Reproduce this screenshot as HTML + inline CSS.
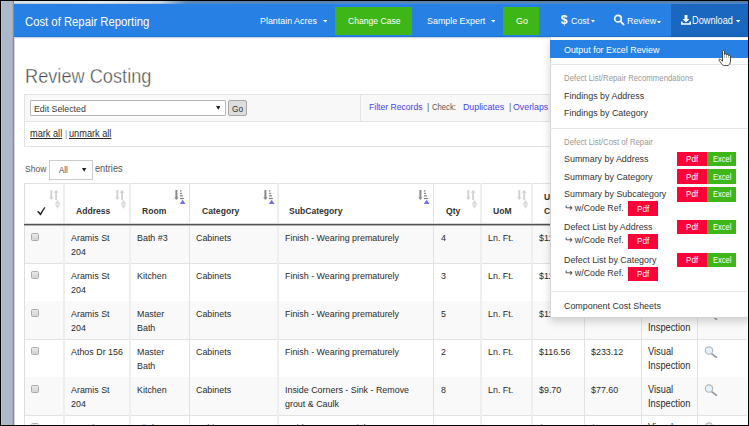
<!DOCTYPE html>
<html><head><meta charset="utf-8"><title>Cost of Repair Reporting</title>
<style>
html,body{margin:0;padding:0;width:749px;height:426px;overflow:hidden;background:#fff}
body{position:relative;font-family:"Liberation Sans", sans-serif}
.t{position:absolute;white-space:nowrap}
.r{position:absolute;display:block}
</style></head><body>
<div class="r" style="left:0;top:0;width:749px;height:426px;background:#fff"></div>
<div class="r" style="left:14px;top:4px;width:734px;height:33px;background:#2780e3;"></div>
<div class="r" style="left:671px;top:4px;width:77px;height:33px;background:#1967be;"></div>
<div class="r" style="left:14px;top:36px;width:657px;height:1px;background:#1f72d4;"></div>
<div class="r" style="left:671px;top:36px;width:77px;height:1px;background:#155fb4;"></div>
<div class="r" style="left:14px;top:37px;width:734px;height:1px;background:#c9d9ec;"></div>
<div class="r" style="left:14px;top:38px;width:734px;height:1px;background:#f1f4f8;"></div>
<div class="t" style="left:25.2px;top:14.70px;font-size:12.43px;line-height:14px;color:#fff;transform:scaleX(0.9091);transform-origin:0 0;">Cost of Repair Reporting</div>
<div class="t" style="left:259.5px;top:15.40px;font-size:9.79px;line-height:11px;color:#fff;transform:scaleX(0.9091);transform-origin:0 0;">Plantain Acres</div>
<svg class="r" style="left:322.6px;top:20.2px" width="4.5" height="2.6" viewBox="0 0 4.5 2.6"><path d="M0 0H4.5L2.25 2.6Z" fill="#fff"/></svg>
<div class="r" style="left:335px;top:7px;width:77px;height:27.5px;background:#3fb618;"></div>
<div class="t" style="left:347.6px;top:15.40px;font-size:9.46px;line-height:11px;color:#fff;transform:scaleX(0.9091);transform-origin:0 0;">Change Case</div>
<div class="t" style="left:427px;top:15.40px;font-size:9.79px;line-height:11px;color:#fff;transform:scaleX(0.9091);transform-origin:0 0;">Sample Expert</div>
<svg class="r" style="left:490.5px;top:20.2px" width="4.5" height="2.6" viewBox="0 0 4.5 2.6"><path d="M0 0H4.5L2.25 2.6Z" fill="#fff"/></svg>
<div class="r" style="left:503px;top:7px;width:36px;height:27.5px;background:#3fb618;"></div>
<div class="t" style="left:515.6px;top:15.40px;font-size:9.79px;line-height:11px;color:#fff;transform:scaleX(0.9091);transform-origin:0 0;">Go</div>
<div class="t" style="left:560.8px;top:12.80px;font-size:12.20px;line-height:14px;color:#fff;font-weight:bold;">$</div>
<div class="t" style="left:571px;top:15.40px;font-size:9.79px;line-height:11px;color:#fff;transform:scaleX(0.9091);transform-origin:0 0;">Cost</div>
<svg class="r" style="left:590.5px;top:20.2px" width="4" height="2.5" viewBox="0 0 4 2.5"><path d="M0 0H4L2.0 2.5Z" fill="#fff"/></svg>
<svg class="r" style="left:613px;top:14px" width="13" height="12" viewBox="0 0 13 12"><circle cx="5" cy="4.7" r="3.3" fill="none" stroke="#fff" stroke-width="1.6"/><path d="M7.4 7.2L10.6 10.6" stroke="#fff" stroke-width="1.9" stroke-linecap="round"/></svg>
<div class="t" style="left:626.8px;top:15.40px;font-size:9.79px;line-height:11px;color:#fff;transform:scaleX(0.9091);transform-origin:0 0;">Review</div>
<svg class="r" style="left:657px;top:20.5px" width="4" height="2.5" viewBox="0 0 4 2.5"><path d="M0 0H4L2.0 2.5Z" fill="#fff"/></svg>
<svg class="r" style="left:680px;top:14px" width="12" height="12" viewBox="0 0 12 12"><path d="M4.6 1H7.4V5H9.4L6 8.6L2.6 5H4.6Z" fill="#fff"/><path d="M1 7.5H2.6V9.3H9.4V7.5H11V10.8H1Z" fill="#fff"/></svg>
<div class="t" style="left:692.2px;top:14.70px;font-size:10.12px;line-height:12px;color:#fff;transform:scaleX(0.9091);transform-origin:0 0;">Download</div>
<svg class="r" style="left:735.6px;top:20.2px" width="4.2" height="2.6" viewBox="0 0 4.2 2.6"><path d="M0 0H4.2L2.1 2.6Z" fill="#fff"/></svg>
<div class="t" style="left:24.5px;top:65.00px;font-size:20.02px;line-height:23px;color:#4a4a4a;transform:scaleX(0.9091);transform-origin:0 0;-webkit-text-stroke:0.4px #fff;">Review Costing</div>
<div class="r" style="left:24px;top:94px;width:724px;height:53px;background:#fff;border:1px solid #e3e3e3;box-sizing:border-box"></div>
<div class="r" style="left:25px;top:95px;width:723px;height:26px;background:#f8f8f8;"></div>
<div class="r" style="left:24px;top:121px;width:724px;height:1px;background:#e3e3e3;"></div>
<div class="r" style="left:360px;top:95px;width:1px;height:26px;background:#e3e3e3;"></div>
<div class="r" style="left:30px;top:100px;width:196px;height:16px;background:#fff;border:1px solid #b9b9b9;box-sizing:border-box;border-radius:1px"></div>
<div class="t" style="left:33.6px;top:102.50px;font-size:9.68px;line-height:11px;color:#3a3a3a;transform:scaleX(0.9091);transform-origin:0 0;">Edit Selected</div>
<svg class="r" style="left:215.5px;top:106px" width="4.6" height="3.8" viewBox="0 0 4.6 3.8"><path d="M0 0H4.6L2.3 3.8Z" fill="#222"/></svg>
<div class="r" style="left:228px;top:100px;width:18.5px;height:16px;background:#dedede;border:1px solid #a6a6a6;box-sizing:border-box;border-radius:2px"></div>
<div class="t" style="left:231.8px;top:103.50px;font-size:9.13px;line-height:10px;color:#333;transform:scaleX(0.9091);transform-origin:0 0;">Go</div>
<div class="t" style="left:369.3px;top:101.10px;font-size:9.46px;line-height:11px;color:#4444ec;transform:scaleX(0.9091);transform-origin:0 0;">Filter Records</div>
<div class="t" style="left:426.8px;top:101.10px;font-size:9.46px;line-height:11px;color:#555;transform:scaleX(0.9091);transform-origin:0 0;">|</div>
<div class="t" style="left:431.6px;top:102.10px;font-size:8.47px;line-height:10px;color:#555;transform:scaleX(0.9091);transform-origin:0 0;">Check:</div>
<div class="t" style="left:463.3px;top:101.10px;font-size:9.68px;line-height:11px;color:#4444ec;transform:scaleX(0.9091);transform-origin:0 0;">Duplicates</div>
<div class="t" style="left:508.6px;top:101.10px;font-size:9.46px;line-height:11px;color:#555;transform:scaleX(0.9091);transform-origin:0 0;">|</div>
<div class="t" style="left:513px;top:101.10px;font-size:9.68px;line-height:11px;color:#4444ec;transform:scaleX(0.9091);transform-origin:0 0;">Overlaps</div>
<div class="t" style="left:30.3px;top:127.80px;font-size:10.12px;line-height:12px;color:#2a2a2a;transform:scaleX(0.9091);transform-origin:0 0;"><u>mark all</u></div>
<div class="t" style="left:65.2px;top:128.30px;font-size:9.79px;line-height:11px;color:#999;transform:scaleX(0.9091);transform-origin:0 0;">|</div>
<div class="t" style="left:69.4px;top:127.80px;font-size:10.12px;line-height:12px;color:#2a2a2a;transform:scaleX(0.9091);transform-origin:0 0;"><u>unmark all</u></div>
<div class="t" style="left:24.7px;top:163.10px;font-size:9.46px;line-height:11px;color:#555;transform:scaleX(0.9091);transform-origin:0 0;">Show</div>
<div class="r" style="left:49px;top:160px;width:44px;height:20px;background:#fff;border:1px solid #ccc;box-sizing:border-box"></div>
<div class="t" style="left:58.5px;top:164.80px;font-size:8.69px;line-height:10px;color:#444;transform:scaleX(0.9091);transform-origin:0 0;">All</div>
<svg class="r" style="left:82.4px;top:167.9px" width="4.4" height="3.8" viewBox="0 0 4.4 3.8"><path d="M0 0H4.4L2.2 3.8Z" fill="#222"/></svg>
<div class="t" style="left:94.7px;top:163.10px;font-size:10.12px;line-height:12px;color:#555;transform:scaleX(0.9091);transform-origin:0 0;">entries</div>
<div class="r" style="left:24px;top:183px;width:723px;height:1px;background:#e2e2e2;"></div>
<div class="r" style="left:24px;top:226px;width:723px;height:38px;background:#f9f9f9;"></div>
<div class="r" style="left:24px;top:263px;width:723px;height:1px;background:#e2e2e2;"></div>
<div class="r" style="left:31px;top:233px;width:8px;height:8px;background:linear-gradient(#e8e8e8,#d4d4d4);border:1px solid #ababab;box-sizing:border-box;border-radius:1.5px"></div>
<div class="t" style="left:71px;top:231.25px;font-size:9.79px;line-height:13.5px;color:#2a2a2a;transform:scaleX(0.9091);transform-origin:0 0;">Aramis St<br>204</div>
<div class="t" style="left:137px;top:231.25px;font-size:9.79px;line-height:13.5px;color:#2a2a2a;transform:scaleX(0.9091);transform-origin:0 0;">Bath #3</div>
<div class="t" style="left:196.3px;top:231.25px;font-size:9.79px;line-height:13.5px;color:#2a2a2a;transform:scaleX(0.9091);transform-origin:0 0;">Cabinets</div>
<div class="t" style="left:284.8px;top:231.25px;font-size:9.79px;line-height:13.5px;color:#2a2a2a;transform:scaleX(0.9091);transform-origin:0 0;">Finish - Wearing prematurely</div>
<div class="t" style="left:440.6px;top:231.25px;font-size:9.79px;line-height:13.5px;color:#2a2a2a;transform:scaleX(0.9091);transform-origin:0 0;">4</div>
<div class="t" style="left:488px;top:231.25px;font-size:9.79px;line-height:13.5px;color:#2a2a2a;transform:scaleX(0.9091);transform-origin:0 0;">Ln. Ft.</div>
<div class="t" style="left:538.6px;top:231.25px;font-size:9.79px;line-height:13.5px;color:#2a2a2a;transform:scaleX(0.9091);transform-origin:0 0;">$116.56</div>
<div class="t" style="left:591.3px;top:231.25px;font-size:9.79px;line-height:13.5px;color:#2a2a2a;transform:scaleX(0.9091);transform-origin:0 0;">$466.24</div>
<div class="t" style="left:648px;top:231.25px;font-size:10.23px;line-height:13.5px;color:#2a2a2a;transform:scaleX(0.9091);transform-origin:0 0;">Visual<br>Inspection</div>
<svg class="r" style="left:704px;top:231.5px" width="15" height="13" viewBox="0 0 15 13"><path d="M7.6 7.6L12.4 11.2" stroke="#9a9aa6" stroke-width="1.7" stroke-linecap="round"/><circle cx="5" cy="4.6" r="3.7" fill="#e2f1fb" stroke="#b4b4b8" stroke-width="1.1"/></svg>
<div class="r" style="left:24px;top:301px;width:723px;height:1px;background:#e2e2e2;"></div>
<div class="r" style="left:31px;top:271px;width:8px;height:8px;background:linear-gradient(#e8e8e8,#d4d4d4);border:1px solid #ababab;box-sizing:border-box;border-radius:1.5px"></div>
<div class="t" style="left:71px;top:269.25px;font-size:9.79px;line-height:13.5px;color:#2a2a2a;transform:scaleX(0.9091);transform-origin:0 0;">Aramis St<br>204</div>
<div class="t" style="left:137px;top:269.25px;font-size:9.79px;line-height:13.5px;color:#2a2a2a;transform:scaleX(0.9091);transform-origin:0 0;">Kitchen</div>
<div class="t" style="left:196.3px;top:269.25px;font-size:9.79px;line-height:13.5px;color:#2a2a2a;transform:scaleX(0.9091);transform-origin:0 0;">Cabinets</div>
<div class="t" style="left:284.8px;top:269.25px;font-size:9.79px;line-height:13.5px;color:#2a2a2a;transform:scaleX(0.9091);transform-origin:0 0;">Finish - Wearing prematurely</div>
<div class="t" style="left:440.6px;top:269.25px;font-size:9.79px;line-height:13.5px;color:#2a2a2a;transform:scaleX(0.9091);transform-origin:0 0;">3</div>
<div class="t" style="left:488px;top:269.25px;font-size:9.79px;line-height:13.5px;color:#2a2a2a;transform:scaleX(0.9091);transform-origin:0 0;">Ln. Ft.</div>
<div class="t" style="left:538.6px;top:269.25px;font-size:9.79px;line-height:13.5px;color:#2a2a2a;transform:scaleX(0.9091);transform-origin:0 0;">$116.56</div>
<div class="t" style="left:591.3px;top:269.25px;font-size:9.79px;line-height:13.5px;color:#2a2a2a;transform:scaleX(0.9091);transform-origin:0 0;">$349.68</div>
<div class="t" style="left:648px;top:269.25px;font-size:10.23px;line-height:13.5px;color:#2a2a2a;transform:scaleX(0.9091);transform-origin:0 0;">Visual<br>Inspection</div>
<svg class="r" style="left:704px;top:269.5px" width="15" height="13" viewBox="0 0 15 13"><path d="M7.6 7.6L12.4 11.2" stroke="#9a9aa6" stroke-width="1.7" stroke-linecap="round"/><circle cx="5" cy="4.6" r="3.7" fill="#e2f1fb" stroke="#b4b4b8" stroke-width="1.1"/></svg>
<div class="r" style="left:24px;top:301px;width:723px;height:38px;background:#f9f9f9;"></div>
<div class="r" style="left:24px;top:339px;width:723px;height:1px;background:#e2e2e2;"></div>
<div class="r" style="left:31px;top:309px;width:8px;height:8px;background:linear-gradient(#e8e8e8,#d4d4d4);border:1px solid #ababab;box-sizing:border-box;border-radius:1.5px"></div>
<div class="t" style="left:71px;top:307.25px;font-size:9.79px;line-height:13.5px;color:#2a2a2a;transform:scaleX(0.9091);transform-origin:0 0;">Aramis St<br>204</div>
<div class="t" style="left:137px;top:307.25px;font-size:9.79px;line-height:13.5px;color:#2a2a2a;transform:scaleX(0.9091);transform-origin:0 0;">Master<br>Bath</div>
<div class="t" style="left:196.3px;top:307.25px;font-size:9.79px;line-height:13.5px;color:#2a2a2a;transform:scaleX(0.9091);transform-origin:0 0;">Cabinets</div>
<div class="t" style="left:284.8px;top:307.25px;font-size:9.79px;line-height:13.5px;color:#2a2a2a;transform:scaleX(0.9091);transform-origin:0 0;">Finish - Wearing prematurely</div>
<div class="t" style="left:440.6px;top:307.25px;font-size:9.79px;line-height:13.5px;color:#2a2a2a;transform:scaleX(0.9091);transform-origin:0 0;">5</div>
<div class="t" style="left:488px;top:307.25px;font-size:9.79px;line-height:13.5px;color:#2a2a2a;transform:scaleX(0.9091);transform-origin:0 0;">Ln. Ft.</div>
<div class="t" style="left:538.6px;top:307.25px;font-size:9.79px;line-height:13.5px;color:#2a2a2a;transform:scaleX(0.9091);transform-origin:0 0;">$116.56</div>
<div class="t" style="left:591.3px;top:307.25px;font-size:9.79px;line-height:13.5px;color:#2a2a2a;transform:scaleX(0.9091);transform-origin:0 0;">$582.80</div>
<div class="t" style="left:648px;top:307.25px;font-size:10.23px;line-height:13.5px;color:#2a2a2a;transform:scaleX(0.9091);transform-origin:0 0;">Visual<br>Inspection</div>
<svg class="r" style="left:704px;top:307.5px" width="15" height="13" viewBox="0 0 15 13"><path d="M7.6 7.6L12.4 11.2" stroke="#9a9aa6" stroke-width="1.7" stroke-linecap="round"/><circle cx="5" cy="4.6" r="3.7" fill="#e2f1fb" stroke="#b4b4b8" stroke-width="1.1"/></svg>
<div class="r" style="left:24px;top:377px;width:723px;height:1px;background:#e2e2e2;"></div>
<div class="r" style="left:31px;top:347px;width:8px;height:8px;background:linear-gradient(#e8e8e8,#d4d4d4);border:1px solid #ababab;box-sizing:border-box;border-radius:1.5px"></div>
<div class="t" style="left:71px;top:345.25px;font-size:9.79px;line-height:13.5px;color:#2a2a2a;transform:scaleX(0.9091);transform-origin:0 0;">Athos Dr 156</div>
<div class="t" style="left:137px;top:345.25px;font-size:9.79px;line-height:13.5px;color:#2a2a2a;transform:scaleX(0.9091);transform-origin:0 0;">Master<br>Bath</div>
<div class="t" style="left:196.3px;top:345.25px;font-size:9.79px;line-height:13.5px;color:#2a2a2a;transform:scaleX(0.9091);transform-origin:0 0;">Cabinets</div>
<div class="t" style="left:284.8px;top:345.25px;font-size:9.79px;line-height:13.5px;color:#2a2a2a;transform:scaleX(0.9091);transform-origin:0 0;">Finish - Wearing prematurely</div>
<div class="t" style="left:440.6px;top:345.25px;font-size:9.79px;line-height:13.5px;color:#2a2a2a;transform:scaleX(0.9091);transform-origin:0 0;">2</div>
<div class="t" style="left:488px;top:345.25px;font-size:9.79px;line-height:13.5px;color:#2a2a2a;transform:scaleX(0.9091);transform-origin:0 0;">Ln. Ft.</div>
<div class="t" style="left:538.6px;top:345.25px;font-size:9.79px;line-height:13.5px;color:#2a2a2a;transform:scaleX(0.9091);transform-origin:0 0;">$116.56</div>
<div class="t" style="left:591.3px;top:345.25px;font-size:9.79px;line-height:13.5px;color:#2a2a2a;transform:scaleX(0.9091);transform-origin:0 0;">$233.12</div>
<div class="t" style="left:648px;top:345.25px;font-size:10.23px;line-height:13.5px;color:#2a2a2a;transform:scaleX(0.9091);transform-origin:0 0;">Visual<br>Inspection</div>
<svg class="r" style="left:704px;top:345.5px" width="15" height="13" viewBox="0 0 15 13"><path d="M7.6 7.6L12.4 11.2" stroke="#9a9aa6" stroke-width="1.7" stroke-linecap="round"/><circle cx="5" cy="4.6" r="3.7" fill="#e2f1fb" stroke="#b4b4b8" stroke-width="1.1"/></svg>
<div class="r" style="left:24px;top:377px;width:723px;height:38px;background:#f9f9f9;"></div>
<div class="r" style="left:24px;top:415px;width:723px;height:1px;background:#e2e2e2;"></div>
<div class="r" style="left:31px;top:385px;width:8px;height:8px;background:linear-gradient(#e8e8e8,#d4d4d4);border:1px solid #ababab;box-sizing:border-box;border-radius:1.5px"></div>
<div class="t" style="left:71px;top:383.25px;font-size:9.79px;line-height:13.5px;color:#2a2a2a;transform:scaleX(0.9091);transform-origin:0 0;">Aramis St<br>204</div>
<div class="t" style="left:137px;top:383.25px;font-size:9.79px;line-height:13.5px;color:#2a2a2a;transform:scaleX(0.9091);transform-origin:0 0;">Kitchen</div>
<div class="t" style="left:196.3px;top:383.25px;font-size:9.79px;line-height:13.5px;color:#2a2a2a;transform:scaleX(0.9091);transform-origin:0 0;">Cabinets</div>
<div class="t" style="left:284.8px;top:383.25px;font-size:9.79px;line-height:13.5px;color:#2a2a2a;transform:scaleX(0.9091);transform-origin:0 0;">Inside Corners - Sink - Remove<br>grout &amp; Caulk</div>
<div class="t" style="left:440.6px;top:383.25px;font-size:9.79px;line-height:13.5px;color:#2a2a2a;transform:scaleX(0.9091);transform-origin:0 0;">8</div>
<div class="t" style="left:488px;top:383.25px;font-size:9.79px;line-height:13.5px;color:#2a2a2a;transform:scaleX(0.9091);transform-origin:0 0;">Ln. Ft.</div>
<div class="t" style="left:538.6px;top:383.25px;font-size:9.79px;line-height:13.5px;color:#2a2a2a;transform:scaleX(0.9091);transform-origin:0 0;">$9.70</div>
<div class="t" style="left:591.3px;top:383.25px;font-size:9.79px;line-height:13.5px;color:#2a2a2a;transform:scaleX(0.9091);transform-origin:0 0;">$77.60</div>
<div class="t" style="left:648px;top:383.25px;font-size:10.23px;line-height:13.5px;color:#2a2a2a;transform:scaleX(0.9091);transform-origin:0 0;">Visual<br>Inspection</div>
<svg class="r" style="left:704px;top:383.5px" width="15" height="13" viewBox="0 0 15 13"><path d="M7.6 7.6L12.4 11.2" stroke="#9a9aa6" stroke-width="1.7" stroke-linecap="round"/><circle cx="5" cy="4.6" r="3.7" fill="#e2f1fb" stroke="#b4b4b8" stroke-width="1.1"/></svg>
<div class="r" style="left:24px;top:453px;width:723px;height:1px;background:#e2e2e2;"></div>
<div class="r" style="left:31px;top:423px;width:8px;height:8px;background:linear-gradient(#e8e8e8,#d4d4d4);border:1px solid #ababab;box-sizing:border-box;border-radius:1.5px"></div>
<div class="t" style="left:71px;top:421.25px;font-size:9.79px;line-height:13.5px;color:#2a2a2a;transform:scaleX(0.9091);transform-origin:0 0;">Aramis St<br>204</div>
<div class="t" style="left:137px;top:421.25px;font-size:9.79px;line-height:13.5px;color:#2a2a2a;transform:scaleX(0.9091);transform-origin:0 0;">Kitchen</div>
<div class="t" style="left:196.3px;top:421.25px;font-size:9.79px;line-height:13.5px;color:#2a2a2a;transform:scaleX(0.9091);transform-origin:0 0;">Cabinets</div>
<div class="t" style="left:284.8px;top:421.25px;font-size:9.79px;line-height:13.5px;color:#2a2a2a;transform:scaleX(0.9091);transform-origin:0 0;">Inside Corners - Sink - Remove<br>grout &amp; Caulk</div>
<div class="t" style="left:440.6px;top:421.25px;font-size:9.79px;line-height:13.5px;color:#2a2a2a;transform:scaleX(0.9091);transform-origin:0 0;">8</div>
<div class="t" style="left:488px;top:421.25px;font-size:9.79px;line-height:13.5px;color:#2a2a2a;transform:scaleX(0.9091);transform-origin:0 0;">Ln. Ft.</div>
<div class="t" style="left:538.6px;top:421.25px;font-size:9.79px;line-height:13.5px;color:#2a2a2a;transform:scaleX(0.9091);transform-origin:0 0;">$9.70</div>
<div class="t" style="left:591.3px;top:421.25px;font-size:9.79px;line-height:13.5px;color:#2a2a2a;transform:scaleX(0.9091);transform-origin:0 0;">$77.60</div>
<div class="t" style="left:648px;top:421.25px;font-size:10.23px;line-height:13.5px;color:#2a2a2a;transform:scaleX(0.9091);transform-origin:0 0;">Visual<br>Inspection</div>
<svg class="r" style="left:704px;top:421.5px" width="15" height="13" viewBox="0 0 15 13"><path d="M7.6 7.6L12.4 11.2" stroke="#9a9aa6" stroke-width="1.7" stroke-linecap="round"/><circle cx="5" cy="4.6" r="3.7" fill="#e2f1fb" stroke="#b4b4b8" stroke-width="1.1"/></svg>
<div class="r" style="left:24px;top:183px;width:1px;height:243px;background:#dedede;"></div>
<div class="r" style="left:63px;top:183px;width:2px;height:243px;background:#eeeeee;"></div>
<div class="r" style="left:129px;top:183px;width:2px;height:243px;background:#eeeeee;"></div>
<div class="r" style="left:189px;top:183px;width:1px;height:243px;background:#e2e2e2;"></div>
<div class="r" style="left:277px;top:183px;width:2px;height:243px;background:#eeeeee;"></div>
<div class="r" style="left:433px;top:183px;width:1px;height:243px;background:#e2e2e2;"></div>
<div class="r" style="left:480px;top:183px;width:2px;height:243px;background:#efefef;"></div>
<div class="r" style="left:531px;top:183px;width:2px;height:243px;background:#eeeeee;"></div>
<div class="r" style="left:584px;top:183px;width:1px;height:243px;background:#e2e2e2;"></div>
<div class="r" style="left:641px;top:183px;width:1px;height:243px;background:#e2e2e2;"></div>
<div class="r" style="left:697px;top:183px;width:1px;height:243px;background:#e2e2e2;"></div>
<div class="r" style="left:24px;top:223px;width:723px;height:1px;background:#d5d5d5;"></div>
<div class="r" style="left:24px;top:224px;width:723px;height:1px;background:#505050;"></div>
<div class="r" style="left:24px;top:225px;width:723px;height:1px;background:#b0b0b0;"></div>
<svg class="r" style="left:36.5px;top:206.5px" width="9" height="9" viewBox="0 0 9 9"><path d="M1 4.6C1.9 5.3 2.8 6.4 3.5 7.6C4.6 5.2 6 2.9 7.6 0.9" fill="none" stroke="#222" stroke-width="1.35" stroke-linecap="round" stroke-linejoin="round"/></svg>
<div class="t" style="left:75.8px;top:205.00px;font-size:9.46px;line-height:11px;color:#333;transform:scaleX(0.9091);transform-origin:0 0;font-weight:bold;">Address</div>
<div class="t" style="left:142px;top:205.00px;font-size:9.46px;line-height:11px;color:#333;transform:scaleX(0.9091);transform-origin:0 0;font-weight:bold;">Room</div>
<div class="t" style="left:201.5px;top:205.00px;font-size:9.46px;line-height:11px;color:#333;transform:scaleX(0.9091);transform-origin:0 0;font-weight:bold;">Category</div>
<div class="t" style="left:289.4px;top:205.00px;font-size:9.46px;line-height:11px;color:#333;transform:scaleX(0.9091);transform-origin:0 0;font-weight:bold;">SubCategory</div>
<div class="t" style="left:445.8px;top:205.00px;font-size:9.46px;line-height:11px;color:#333;transform:scaleX(0.9091);transform-origin:0 0;font-weight:bold;">Qty</div>
<div class="t" style="left:492.9px;top:205.00px;font-size:9.46px;line-height:11px;color:#333;transform:scaleX(0.9091);transform-origin:0 0;font-weight:bold;">UoM</div>
<div class="t" style="left:543.7px;top:190.15px;font-size:9.46px;line-height:13.5px;color:#333;transform:scaleX(0.9091);transform-origin:0 0;font-weight:bold;">Unit<br>Cost</div>
<div class="t" style="left:596px;top:190.15px;font-size:9.46px;line-height:13.5px;color:#333;transform:scaleX(0.9091);transform-origin:0 0;font-weight:bold;">Total<br>Cost</div>
<div class="t" style="left:653px;top:205.00px;font-size:9.46px;line-height:11px;color:#333;transform:scaleX(0.9091);transform-origin:0 0;font-weight:bold;">Source</div>
<svg class="r" style="left:48.8px;top:190px" width="12" height="19" viewBox="0 0 12 19"><g fill="#d2d2d2"><path d="M1.35 0H3.25V7.2H4.6L2.3 10L0 7.2H1.35Z"/><path d="M6.2 10H8.0V2.8H9.7L7.1 0L4.5 2.8H6.2Z"/></g><g fill="#dcdcdc"><path d="M8.5 9.8L11.2 13.9H5.8Z"/><path d="M8.5 18.9L11.2 14.5H5.8Z"/></g></svg>
<svg class="r" style="left:114.9px;top:190px" width="12" height="19" viewBox="0 0 12 19"><g fill="#d2d2d2"><path d="M1.35 0H3.25V7.2H4.6L2.3 10L0 7.2H1.35Z"/><path d="M6.2 10H8.0V2.8H9.7L7.1 0L4.5 2.8H6.2Z"/></g><g fill="#dcdcdc"><path d="M8.5 9.8L11.2 13.9H5.8Z"/><path d="M8.5 18.9L11.2 14.5H5.8Z"/></g></svg>
<svg class="r" style="left:174.1px;top:190px" width="12" height="15" viewBox="0 0 12 15"><g fill="#8a8a8a"><path d="M1.4 0H3.4V7.3H4.6L2.4 10L0.2 7.3H1.4Z"/></g><g fill="#7a7a7a"><rect x="5.9" y="0.3" width="1.5" height="1.2"/><rect x="5.9" y="2.8" width="2.2" height="1.1"/><rect x="5.9" y="5.2" width="3" height="1.2"/><rect x="5.9" y="7.9" width="3.9" height="1.2"/></g><path d="M8.65 9.7L11.5 14H5.8Z" fill="#6e6ee6"/></svg>
<svg class="r" style="left:262.6px;top:190px" width="12" height="15" viewBox="0 0 12 15"><g fill="#8a8a8a"><path d="M1.4 0H3.4V7.3H4.6L2.4 10L0.2 7.3H1.4Z"/></g><g fill="#7a7a7a"><rect x="5.9" y="0.3" width="1.5" height="1.2"/><rect x="5.9" y="2.8" width="2.2" height="1.1"/><rect x="5.9" y="5.2" width="3" height="1.2"/><rect x="5.9" y="7.9" width="3.9" height="1.2"/></g><path d="M8.65 9.7L11.5 14H5.8Z" fill="#6e6ee6"/></svg>
<svg class="r" style="left:418.2px;top:190px" width="12" height="15" viewBox="0 0 12 15"><g fill="#8a8a8a"><path d="M1.4 0H3.4V7.3H4.6L2.4 10L0.2 7.3H1.4Z"/></g><g fill="#7a7a7a"><rect x="5.9" y="0.3" width="1.5" height="1.2"/><rect x="5.9" y="2.8" width="2.2" height="1.1"/><rect x="5.9" y="5.2" width="3" height="1.2"/><rect x="5.9" y="7.9" width="3.9" height="1.2"/></g><path d="M8.65 9.7L11.5 14H5.8Z" fill="#6e6ee6"/></svg>
<svg class="r" style="left:465.8px;top:190px" width="12" height="19" viewBox="0 0 12 19"><g fill="#d2d2d2"><path d="M1.35 0H3.25V7.2H4.6L2.3 10L0 7.2H1.35Z"/><path d="M6.2 10H8.0V2.8H9.7L7.1 0L4.5 2.8H6.2Z"/></g><g fill="#dcdcdc"><path d="M8.5 9.8L11.2 13.9H5.8Z"/><path d="M8.5 18.9L11.2 14.5H5.8Z"/></g></svg>
<svg class="r" style="left:516.6px;top:190px" width="12" height="19" viewBox="0 0 12 19"><g fill="#d2d2d2"><path d="M1.35 0H3.25V7.2H4.6L2.3 10L0 7.2H1.35Z"/><path d="M6.2 10H8.0V2.8H9.7L7.1 0L4.5 2.8H6.2Z"/></g><g fill="#dcdcdc"><path d="M8.5 9.8L11.2 13.9H5.8Z"/><path d="M8.5 18.9L11.2 14.5H5.8Z"/></g></svg>
<div class="r" style="left:549.5px;top:37px;width:200px;height:280.5px;background:#fff;border:1px solid rgba(0,0,0,.16);border-top:1px solid #e6edf5;box-sizing:border-box;box-shadow:0 4px 8px rgba(0,0,0,.16)"></div>
<div class="r" style="left:550px;top:40px;width:198px;height:18px;background:#2780e3;"></div>
<div class="t" style="left:563.7px;top:43.60px;font-size:9.79px;line-height:11px;color:#fff;transform:scaleX(0.9091);transform-origin:0 0;">Output for Excel Review</div>
<div class="r" style="left:550px;top:64px;width:198px;height:1px;background:#e5e5e5;"></div>
<div class="t" style="left:563.5px;top:73.40px;font-size:8.58px;line-height:10px;color:#999;transform:scaleX(0.9091);transform-origin:0 0;">Defect List/Repair Recommendations</div>
<div class="t" style="left:563.5px;top:90.00px;font-size:9.79px;line-height:11px;color:#333;transform:scaleX(0.9091);transform-origin:0 0;">Findings by Address</div>
<div class="t" style="left:563.5px;top:107.00px;font-size:9.79px;line-height:11px;color:#333;transform:scaleX(0.9091);transform-origin:0 0;">Findings by Category</div>
<div class="r" style="left:550px;top:128px;width:198px;height:1px;background:#e5e5e5;"></div>
<div class="t" style="left:563.5px;top:137.00px;font-size:8.58px;line-height:10px;color:#999;transform:scaleX(0.9091);transform-origin:0 0;">Defect List/Cost of Repair</div>
<div class="t" style="left:563.5px;top:153.20px;font-size:9.79px;line-height:11px;color:#333;transform:scaleX(0.9091);transform-origin:0 0;">Summary by Address</div>
<div class="r" style="left:677px;top:151.7px;width:30px;height:14.5px;background:#ff0039;"></div>
<div class="t" style="left:685.7px;top:154.00px;font-size:8.91px;line-height:10px;color:#fff;transform:scaleX(0.9091);transform-origin:0 0;">Pdf</div>
<div class="r" style="left:707px;top:151.7px;width:29.2px;height:14.5px;background:#3fb618;"></div>
<div class="t" style="left:712.5px;top:155.00px;font-size:8.25px;line-height:9px;color:#fff;transform:scaleX(0.9091);transform-origin:0 0;">Excel</div>
<div class="t" style="left:563.5px;top:170.50px;font-size:9.79px;line-height:11px;color:#333;transform:scaleX(0.9091);transform-origin:0 0;">Summary by Category</div>
<div class="r" style="left:677px;top:169.3px;width:30px;height:14.5px;background:#ff0039;"></div>
<div class="t" style="left:685.7px;top:171.60px;font-size:8.91px;line-height:10px;color:#fff;transform:scaleX(0.9091);transform-origin:0 0;">Pdf</div>
<div class="r" style="left:707px;top:169.3px;width:29.2px;height:14.5px;background:#3fb618;"></div>
<div class="t" style="left:712.5px;top:172.60px;font-size:8.25px;line-height:9px;color:#fff;transform:scaleX(0.9091);transform-origin:0 0;">Excel</div>
<div class="t" style="left:563.5px;top:188.00px;font-size:9.79px;line-height:11px;color:#333;transform:scaleX(0.9091);transform-origin:0 0;">Summary by Subcategory</div>
<div class="r" style="left:677px;top:187px;width:30px;height:14.5px;background:#ff0039;"></div>
<div class="t" style="left:685.7px;top:189.30px;font-size:8.91px;line-height:10px;color:#fff;transform:scaleX(0.9091);transform-origin:0 0;">Pdf</div>
<div class="r" style="left:707px;top:187px;width:29.2px;height:14.5px;background:#3fb618;"></div>
<div class="t" style="left:712.5px;top:190.30px;font-size:8.25px;line-height:9px;color:#fff;transform:scaleX(0.9091);transform-origin:0 0;">Excel</div>
<div class="t" style="left:565px;top:201.80px;font-size:9.79px;line-height:11px;color:#333;transform:scaleX(0.9091);transform-origin:0 0;">&#8618; w/Code Ref.</div>
<div class="r" style="left:627.8px;top:201.3px;width:30px;height:14.5px;background:#ff0039;"></div>
<div class="t" style="left:636.5px;top:203.60px;font-size:8.91px;line-height:10px;color:#fff;transform:scaleX(0.9091);transform-origin:0 0;">Pdf</div>
<div class="t" style="left:563.5px;top:220.60px;font-size:9.79px;line-height:11px;color:#333;transform:scaleX(0.9091);transform-origin:0 0;">Defect List by Address</div>
<div class="r" style="left:677px;top:219.7px;width:30px;height:14.5px;background:#ff0039;"></div>
<div class="t" style="left:685.7px;top:222.00px;font-size:8.91px;line-height:10px;color:#fff;transform:scaleX(0.9091);transform-origin:0 0;">Pdf</div>
<div class="r" style="left:707px;top:219.7px;width:29.2px;height:14.5px;background:#3fb618;"></div>
<div class="t" style="left:712.5px;top:223.00px;font-size:8.25px;line-height:9px;color:#fff;transform:scaleX(0.9091);transform-origin:0 0;">Excel</div>
<div class="t" style="left:565px;top:234.40px;font-size:9.79px;line-height:11px;color:#333;transform:scaleX(0.9091);transform-origin:0 0;">&#8618; w/Code Ref.</div>
<div class="r" style="left:627.8px;top:234.0px;width:30px;height:14.5px;background:#ff0039;"></div>
<div class="t" style="left:636.5px;top:236.30px;font-size:8.91px;line-height:10px;color:#fff;transform:scaleX(0.9091);transform-origin:0 0;">Pdf</div>
<div class="t" style="left:563.5px;top:253.60px;font-size:9.79px;line-height:11px;color:#333;transform:scaleX(0.9091);transform-origin:0 0;">Defect List by Category</div>
<div class="r" style="left:677px;top:252.5px;width:30px;height:14.5px;background:#ff0039;"></div>
<div class="t" style="left:685.7px;top:254.80px;font-size:8.91px;line-height:10px;color:#fff;transform:scaleX(0.9091);transform-origin:0 0;">Pdf</div>
<div class="r" style="left:707px;top:252.5px;width:29.2px;height:14.5px;background:#3fb618;"></div>
<div class="t" style="left:712.5px;top:255.80px;font-size:8.25px;line-height:9px;color:#fff;transform:scaleX(0.9091);transform-origin:0 0;">Excel</div>
<div class="t" style="left:565px;top:267.40px;font-size:9.79px;line-height:11px;color:#333;transform:scaleX(0.9091);transform-origin:0 0;">&#8618; w/Code Ref.</div>
<div class="r" style="left:627.8px;top:266.8px;width:30px;height:14.5px;background:#ff0039;"></div>
<div class="t" style="left:636.5px;top:269.10px;font-size:8.91px;line-height:10px;color:#fff;transform:scaleX(0.9091);transform-origin:0 0;">Pdf</div>
<div class="r" style="left:550px;top:290.5px;width:198px;height:1px;background:#e5e5e5;"></div>
<div class="t" style="left:563.5px;top:299.50px;font-size:9.79px;line-height:11px;color:#333;transform:scaleX(0.9091);transform-origin:0 0;">Component Cost Sheets</div>
<svg class="r" style="left:718px;top:49px" width="15" height="18" viewBox="0 0 15 18"><path d="M4.5 2.2C4.5 0.9 6.5 0.9 6.5 2.2V5.6C6.5 4.5 8.5 4.5 8.5 5.6V6.2C8.5 5.2 10.5 5.2 10.5 6.2V6.8C10.5 5.8 12.5 5.8 12.5 6.9V12C12.5 14.6 11.2 16.6 9 16.6H6.6C5.1 16.6 4.3 15.8 3.6 14.8L1.1 11.3C0.6 10.5 1.5 9.5 2.3 10.2L4.5 12.2Z" fill="#fff" stroke="#333" stroke-width="0.9" stroke-linejoin="round"/><path d="M6.5 5.6V9M8.5 6.2V9M10.5 6.8V9" stroke="#888" stroke-width="0.6"/></svg>
<div class="r" style="left:0px;top:0px;width:1px;height:426px;background:#000;"></div>
<div class="r" style="left:1px;top:0px;width:11px;height:426px;background:#adb9ca;"></div>
<div class="r" style="left:1px;top:0px;width:1px;height:426px;background:#b9c6d6;"></div>
<div class="r" style="left:12px;top:0px;width:1px;height:426px;background:#a2acba;"></div>
<div class="r" style="left:13px;top:0px;width:1px;height:426px;background:#858d99;"></div>
<div class="r" style="left:14px;top:37px;width:1px;height:389px;background:#d8d8d8;"></div>
<div class="r" style="left:0px;top:0px;width:749px;height:1px;background:#000;"></div>
<div class="r" style="left:14px;top:1px;width:734px;height:2px;background:linear-gradient(90deg,#d9e1e8 0%,#e3e9ee 12%,#c9d5df 19.9%,#5a86ab 23.5%,#5080a8 100%);"></div>
<div class="r" style="left:14px;top:3px;width:734px;height:1px;background:linear-gradient(90deg,#b9cde0 0%,#c4d4e2 12%,#b0c6dc 19.9%,#4c89d2 23.5%,#4a88d4 100%);"></div>
<div class="r" style="left:748px;top:0px;width:1px;height:426px;background:#000;"></div>
<div class="r" style="left:0px;top:425px;width:749px;height:1px;background:#000;"></div>
</body></html>
